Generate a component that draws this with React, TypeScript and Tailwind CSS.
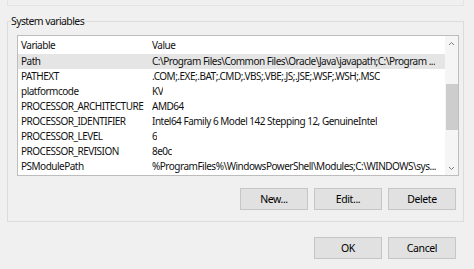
const rows = [
  { name: "Path", value: "C:\\Program Files\\Common Files\\Oracle\\Java\\javapath;C:\\Program ...", selected: true },
  { name: "PATHEXT", value: ".COM;.EXE;.BAT;.CMD;.VBS;.VBE;.JS;.JSE;.WSF;.WSH;.MSC" },
  { name: "platformcode", value: "KV" },
  { name: "PROCESSOR_ARCHITECTURE", value: "AMD64" },
  { name: "PROCESSOR_IDENTIFIER", value: "Intel64 Family 6 Model 142 Stepping 12, GenuineIntel" },
  { name: "PROCESSOR_LEVEL", value: "6" },
  { name: "PROCESSOR_REVISION", value: "8e0c" },
  { name: "PSModulePath", value: "%ProgramFiles%\\WindowsPowerShell\\Modules;C:\\WINDOWS\\sys..." },
];

function Btn({ label }: { label: string }) {
  return (
    <button className="w-[68px] h-[22px] bg-[#e1e1e1] border border-[#c6c6c6] text-[10.5px] tracking-[-0.4px] leading-none text-black">
      {label}
    </button>
  );
}

export default function App() {
  return (
    <div
      className="w-[474px] h-[269px] bg-[#f0f0f0] overflow-hidden text-[#111]"
      style={{ fontFamily: '"Noto Sans", "Open Sans", sans-serif' }}
    >
      <div className="ml-[7px] w-[457px] h-[6px] border-x border-b border-[#e4e4e4]" />

      <fieldset className="ml-[7px] mt-[8px] w-[457px] h-[208px] border border-[#dcdcdc] flex flex-col">
        <legend className="ml-[3px] text-[10.5px] tracking-[-0.6px] leading-[14px]">System variables</legend>

        <div className="ml-[9px] mt-[7px] w-[442px] h-[141px] border border-[#bdbdbd] bg-white flex">
          <div className="flex-1 min-w-0 text-[10px] tracking-[-0.5px]">
            <div className="h-[18px] flex items-center">
              <div className="w-[134px] pl-[3px]">Variable</div>
              <div>Value</div>
            </div>
            {rows.map((r) => (
              <div
                key={r.name}
                className={`h-[15px] flex items-center whitespace-nowrap ${r.selected ? "bg-[#e5e5e5]" : ""}`}
              >
                <div className="w-[134px] pl-[3px] shrink-0">{r.name}</div>
                <div className="overflow-hidden">{r.value}</div>
              </div>
            ))}
          </div>

          <div className="w-[13px] bg-[#f5f5f5] flex flex-col items-center">
            <svg width="7" height="5" viewBox="0 0 7 5" className="mt-[5px]">
              <path d="M1 4 L3.5 1.5 L6 4" fill="none" stroke="#7a7a7a" strokeWidth="1" />
            </svg>
            <div className="mt-[38px] w-[12px] h-[46px] bg-[#cdcdcd]" />
            <div className="flex-1" />
            <svg width="7" height="5" viewBox="0 0 7 5" className="mb-[4px]">
              <path d="M1 1 L3.5 3.5 L6 1" fill="none" stroke="#7a7a7a" strokeWidth="1" />
            </svg>
          </div>
        </div>

        <div className="mt-[12px] pr-[7px] flex justify-end gap-[6px]">
          <Btn label="New..." />
          <Btn label="Edit..." />
          <Btn label="Delete" />
        </div>
      </fieldset>

      <div className="mt-[15px] pr-[18px] flex justify-end gap-[6px]">
        <Btn label="OK" />
        <Btn label="Cancel" />
      </div>
    </div>
  );
}
